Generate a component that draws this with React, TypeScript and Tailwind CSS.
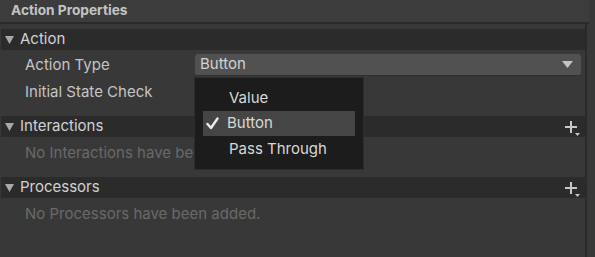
import React from "react";

function Tri() {
  return (
    <svg width="9" height="8" viewBox="0 0 9 8" className="shrink-0">
      <path d="M0 0 H9 L4.5 8 Z" fill="#a8a8a8" />
    </svg>
  );
}

function Plus() {
  return (
    <svg width="15" height="15" viewBox="0 0 15 15" className="shrink-0 mt-[3px]">
      <rect x="5" y="0" width="2" height="12" fill="#c8c8c8" />
      <rect x="0" y="5" width="12" height="2" fill="#c8c8c8" />
      <path d="M10 12 H15 L12.5 15 Z" fill="#c8c8c8" />
    </svg>
  );
}

function SectionHeader({ title, plus }: { title: string; plus?: boolean }) {
  return (
    <div className="h-[21px] bg-[#2b2b2b] flex items-center pl-[4px] pr-[5px]">
      <Tri />
      <span className="ml-[6px] text-[15px] text-[#d2d2d2]">{title}</span>
      <div className="flex-1" />
      {plus && <Plus />}
    </div>
  );
}

export default function App() {
  return (
    <div
      className="w-[595px] h-[257px] bg-[#383838] relative overflow-hidden"
      style={{ fontFamily: "Inter, 'Noto Sans', sans-serif" }}
    >
      <div className="h-[24px] bg-[#3c3c3c] flex items-center pl-[11px] pb-[1px] border-b-2 border-[#2a2a2a] w-[589px]">
        <span className="text-[13.7px] font-bold text-[#c4c4c4]">Action Properties</span>
      </div>
      <div className="flex">
        <div className="w-[587px] border-r-2 border-[#2a2a2a] h-[233px] pl-[1px] pt-[5px]">
          <SectionHeader title="Action" />
          <div className="flex items-center h-[22px] mt-[4px]">
            <span className="pl-[24px] w-[194px] text-[15px] text-[#c4c4c4]">Action Type</span>
            <div className="flex-1 mr-[4px] h-[22px] bg-[#515151] rounded-[3px] border-b border-[#2e2e2e] flex items-center pl-[5px] pr-[8px]">
              <span className="text-[15px] text-[#d2d2d2]">Button</span>
              <div className="flex-1" />
              <svg width="11" height="7" viewBox="0 0 11 7">
                <path d="M0 0 H11 L5.5 7 Z" fill="#c4c4c4" />
              </svg>
            </div>
          </div>
          <div className="flex items-center h-[22px] mt-[5px]">
            <span className="pl-[24px] text-[15px] text-[#c4c4c4]">Initial State Check</span>
          </div>
          <div className="mt-[13px]">
            <SectionHeader title="Interactions" plus />
          </div>
          <div className="h-[22px] flex items-center mt-[5px]">
            <span className="pl-[24px] text-[15px] text-[#6a6a6a]">No Interactions have been added.</span>
          </div>
          <div className="mt-[13px]">
            <SectionHeader title="Processors" plus />
          </div>
          <div className="h-[22px] flex items-center mt-[5px]">
            <span className="pl-[24px] text-[15px] text-[#6a6a6a]">No Processors have been added.</span>
          </div>
        </div>
      </div>

      <div className="absolute left-[194px] top-[77px] w-[170px] h-[93px] bg-[#1c1c1c] border border-[#2c2c2c] pt-[8px] px-[8px]">
        <div className="h-[25px] flex items-center pl-[26px] text-[15px] text-[#d8d8d8]">Value</div>
        <div className="h-[25px] flex items-center bg-[#454545] text-[15px] text-[#d8d8d8]">
          <span className="w-[24px] pl-[3px] flex items-center">
            <svg width="13" height="13" viewBox="0 0 13 13">
              <path d="M1.5 7 L5 11 L11.5 1.5" stroke="#ececec" strokeWidth="2.4" fill="none" strokeLinecap="round" strokeLinejoin="round" />
            </svg>
          </span>
          <span>Button</span>
        </div>
        <div className="h-[26px] flex items-center pl-[26px] text-[15px] text-[#d8d8d8]">Pass Through</div>
      </div>
    </div>
  );
}
